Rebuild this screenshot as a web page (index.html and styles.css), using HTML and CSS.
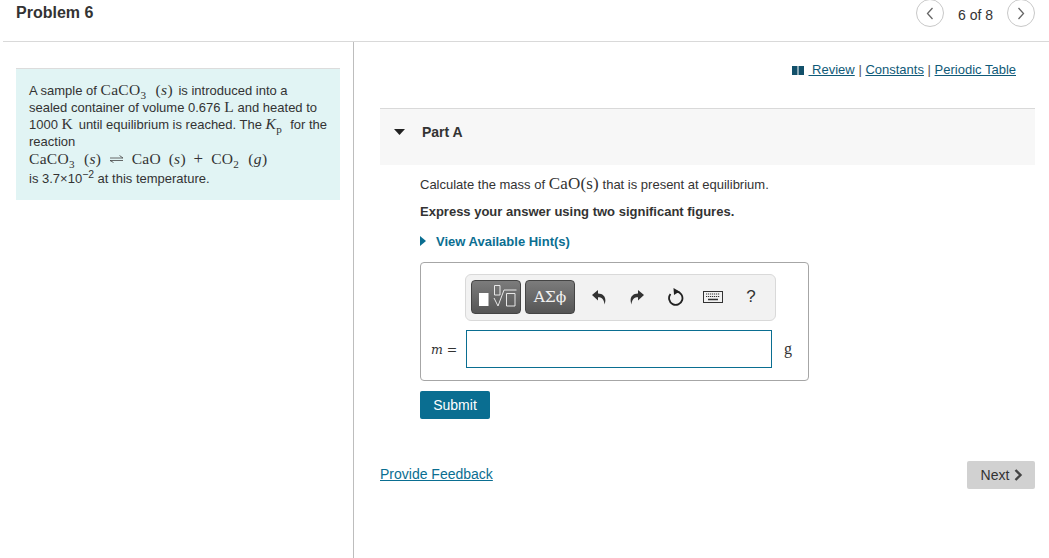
FILE: index.html
```html
<!DOCTYPE html>
<html lang="en">
<head>
<meta charset="utf-8">
<title>Problem 6</title>
<link rel="stylesheet" href="styles.css">
</head>
<body>
<header class="top">
  <h1 class="title">Problem 6</h1>
  <nav class="pager">
    <a class="circle"><svg width="8" height="13" viewBox="0 0 8 13"><path d="M6.500 1 1.500 6.500l5 5.500" fill="none" stroke="#666" stroke-width="1.300"/></svg></a>
    <span class="count">6 of 8</span>
    <a class="circle"><svg width="8" height="13" viewBox="0 0 8 13"><path d="M1.500 1l5 5.500-5 5.500" fill="none" stroke="#666" stroke-width="1.300"/></svg></a>
  </nav>
</header>
<main class="split">
  <aside class="left">
    <div class="intro">
      <div class="line">A sample of <span class="m">CaCO<sub>3</sub> (<i>s</i>)</span> is introduced into a</div>
      <div class="line">sealed container of volume 0.676 <span class="m tight">L</span> and heated to</div>
      <div class="line">1000 <span class="m">K</span> until equilibrium is reached. The <span class="m"><i>K</i><sub class="wide">p</sub></span> for the</div>
      <div class="line after-kp">reaction</div>
      <div class="line"><span class="m">CaCO<sub>3</sub> (<i>s</i>) <svg class="arrows" width="15" height="8" viewBox="0 0 15 8"><path d="M1 3h13L10.500 .5M14 5.500H1l3.500 2" fill="none" stroke="#444" stroke-width=".8"/></svg> CaO (<i>s</i>) <span class="plus">+</span> CO<sub>2</sub> (<i>g</i>)</span></div>
      <div class="line last">is 3.7×10<sup>−2</sup> at this temperature.</div>
    </div>
  </aside>
  <section class="right">
    <div class="links">
      <svg class="book" width="12" height="9" viewBox="0 0 12 9"><path d="M0 0h5.500v9H0zM6.500 0H12v9H6.500z" fill="#12506a"/></svg>
      <a>&nbsp;Review</a> <span class="sep">|</span> <a>Constants</a> <span class="sep">|</span> <a>Periodic Table</a>
    </div>
    <div class="part-head">
      <svg class="caret" width="11" height="6" viewBox="0 0 11 6"><path d="M0 0h11L5.500 6z" fill="#222"/></svg>
      <span>Part A</span>
    </div>
    <div class="part-body">
      <p class="q">Calculate the mass of <span class="m big">CaO(s)</span> that is present at equilibrium.</p>
      <p class="strong">Express your answer using two significant figures.</p>
      <a class="hint"><svg width="6" height="10" viewBox="0 0 6 10"><path d="M0 0l6 5-6 5z" fill="#0a6e91"/></svg>View Available Hint(s)</a>
      <div class="answer">
        <div class="toolbar">
          <button class="tool"><svg width="48" height="32" viewBox="1 1 48 32"><rect x="8" y="13" width="9.500" height="13" fill="#fff"/><g fill="none" stroke="#e8e8e8" stroke-width="1"><path d="M23.500 5.500h5.500v9.500h-5.500z"/><path d="M23 18l4 8 6-16h12.500"/><path d="M35.500 13.500h8.500v12.500h-8.500z"/></g></svg></button>
          <button class="tool greek">ΑΣϕ</button>
          <div class="actions">
            <svg width="14" height="15" viewBox="0 0 14 15"><path d="M6 0 0 5l6 5.500V7.200c3.500 0 6 1.500 6.500 7.300C15 8 12 3.500 6 3.400z" fill="#333"/></svg>
            <svg width="14" height="15" viewBox="0 0 14 15"><path d="M8 0l6 5-6 5.500V7.200c-3.500 0-6 1.500-6.500 7.300C-1 8 2 3.500 8 3.400z" fill="#333"/></svg>
            <svg width="17" height="18" viewBox="0 0 17 18"><path d="M9.500 3.500A6.700 6.700 0 1 1 3.500 6" fill="none" stroke="#222" stroke-width="1.800"/><path d="M6.500 0l6 3.500-5.500 3.500z" fill="#222"/></svg>
            <svg width="20" height="12" viewBox="0 0 20 12"><rect x=".5" y=".5" width="19" height="11" fill="#f2f2f2" stroke="#333"/><path d="M3 3h14M3 5.500h14" stroke="#333" stroke-width="1.200" stroke-dasharray="1.200 .8"/><path d="M5 8.500h10" stroke="#333" stroke-width="1.500"/></svg>
            <span class="help">?</span>
          </div>
        </div>
        <div class="entry">
          <span class="lhs"><i>m</i> =</span>
          <input class="field" type="text" aria-label="m">
          <span class="unit">g</span>
        </div>
      </div>
      <button class="submit">Submit</button>
    </div>
    <div class="foot">
      <a class="feedback">Provide Feedback</a>
      <button class="next">Next<svg width="9" height="12" viewBox="0 0 9 12"><path d="M1.500 1l5 5-5 5" fill="none" stroke="#444" stroke-width="2.400"/></svg></button>
    </div>
  </section>
</main>
</body>
</html>
```
FILE: styles.css
```css
* { box-sizing: border-box; }
html, body { margin: 0; height: 100%; }
body {
  font-family: "Liberation Sans", Arial, sans-serif;
  font-size: 13px;
  color: #333;
  background: #fff;
  overflow: hidden;
}
.top {
  height: 42px;
  margin-left: 3px;
  padding: 0 14px 0 13px;
  border-bottom: 1px solid #d9d9d9;
  display: flex;
  justify-content: space-between;
  align-items: flex-start;
}
.title { margin: 4px 0 0; font-size: 16px; line-height: 18px; font-weight: bold; color: #333; }
.pager { display: flex; align-items: center; height: 28px; margin-top: -1px; }
.circle {
  width: 28px; height: 28px;
  border: 1px solid #c8c8c8;
  border-radius: 50%;
  display: flex; align-items: center; justify-content: center;
}
.count { width: 63px; text-align: center; font-size: 14px; color: #333; padding-top: 4px; }
.split { display: flex; height: 516px; }
.left {
  width: 354px;
  padding: 26px 13px 0 16px;
  border-right: 1px solid #bdbdbd;
}
.intro {
  background: #e1f4f4;
  border-top: 1px solid #dcdcdc;
  height: 132px;
  padding: 12px 8px 0 13px;
}
.line { height: 17px; line-height: 17px; font-size: 13px; white-space: nowrap; }
.after-kp { margin-top: 1px; }
.last { margin-top: 3px; }
.m {
  font-family: "Liberation Serif", serif;
  font-size: 15.500px;
  word-spacing: 3.500px;
  letter-spacing: .3px;
  padding-right: 2px;
}
.tight { padding-right: 0; }
.m i { font-size: 15.500px; }
sub { font-size: 72%; line-height: 0; padding-right: 1.500px; }
.wide { padding-right: 2.500px; }
sup { font-size: 80%; line-height: 0; }
.plus { font-size: 17px; }
.arrows { vertical-align: 1px; }
.right { flex: 1; padding: 0 14px 0 26px; min-width: 0; }
.links {
  height: 66px;
  padding: 20px 19px 0 0;
  text-align: right;
  font-size: 13px;
  line-height: 16px;
}
.links a { color: #0f5a78; text-decoration: underline; }
.sep { color: #555; }
.book { vertical-align: -0.500px; margin-right: 1px; }
.part-head {
  height: 57px;
  background: #f7f7f7;
  border-top: 1px solid #d9d9d9;
  display: flex;
  align-items: flex-start;
  padding: 14px 0 0 14px;
  font-size: 14px;
  line-height: 18px;
  font-weight: bold;
}
.caret { margin: 6px 17px 0 0; }
.part-body { padding: 9px 0 0 40px; }
.q { margin: 0; height: 20px; line-height: 20px; font-size: 13px; }
.big { font-size: 17px; letter-spacing: .2px; padding-right: 0; }
.strong { margin: 8px 0 0; height: 20px; line-height: 20px; font-size: 13px; font-weight: bold; }
.hint {
  display: flex; align-items: center;
  margin-top: 9px; height: 20px;
  color: #0a6e91; font-weight: bold; font-size: 13px; gap: 10px;
}
.answer {
  width: 389px; height: 119px;
  margin-top: 11px;
  border: 1px solid #a6a6a6;
  border-radius: 4px;
  padding: 11px 0 0 44px;
}
.toolbar {
  width: 311px; height: 47px;
  background: #f2f2f2;
  border: 1px solid #d9d9d9;
  border-radius: 6px;
  display: flex; align-items: center;
  padding: 0 0 1px 5px; gap: 4px;
}
.tool {
  width: 50px; height: 34px;
  padding: 0; margin: 0;
  border: 1px solid #444;
  border-radius: 4px;
  background: linear-gradient(#7c7c7c, #555);
  color: #f0f0f0;
  display: flex; align-items: center; justify-content: center;
}
.greek { font-family: "DejaVu Serif", serif; font-size: 15.500px; }
.actions {
  display: grid;
  grid-auto-flow: column;
  grid-auto-columns: 38px;
  align-items: center;
  justify-items: center;
  margin-left: 1px;
}
.help { font-size: 17px; color: #333; }
.entry { display: flex; align-items: center; margin-top: 9px; height: 38px; }
.lhs { width: 35px; margin-left: -34px; font-family: "DejaVu Serif", serif; font-size: 12.500px; color: #333; white-space: nowrap; }
.field { width: 306px; height: 38px; border: 1px solid #0a6e91; background: #fff; margin: 0; padding: 0; outline: none; border-radius: 0; }
.unit { margin-left: 12px; font-family: "Liberation Serif", serif; font-size: 16px; }
.submit {
  display: block;
  width: 70px; height: 28px;
  margin-top: 10px;
  border: 0; border-radius: 2px;
  background: #0a6e91;
  color: #fff;
  font: 14px "Liberation Sans", sans-serif;
  padding: 0;
}
.foot {
  display: flex; justify-content: space-between; align-items: flex-start;
  margin-top: 42px;
}
.feedback { color: #0a6e91; text-decoration: underline; font-size: 14px; line-height: 26px; }
.next {
  width: 68px; height: 28px;
  border: 0; border-radius: 2px;
  background: #d1d1d1;
  color: #333;
  font: 14px "Liberation Sans", sans-serif;
  padding: 0 0 0 2px;
  display: flex; align-items: center; justify-content: center; gap: 5px;
}
```
